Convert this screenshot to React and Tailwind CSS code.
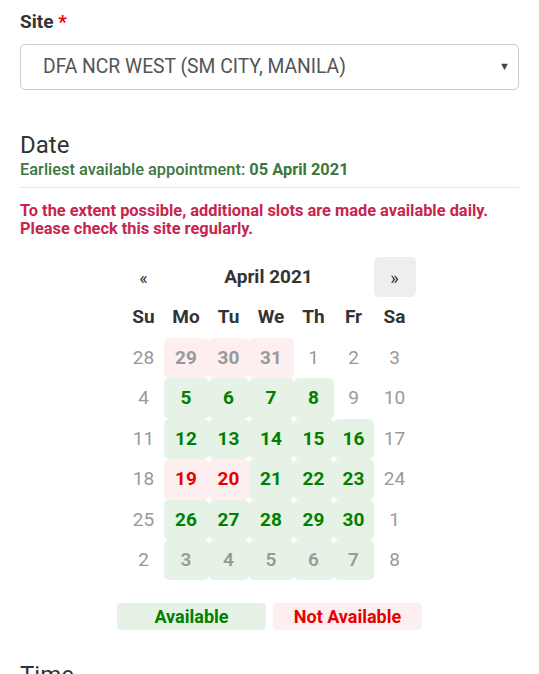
import React from 'react';

const cols = ['Su', 'Mo', 'Tu', 'We', 'Th', 'Fr', 'Sa'];

// kind: o = plain gray, x = not available (pink, gray), a = available (green),
// n = not available (pink, red), f = next month available (green, gray)
const weeks = [
    [['28', 'o'], ['29', 'x'], ['30', 'x'], ['31', 'x'], ['1', 'o'], ['2', 'o'], ['3', 'o']],
    [['4', 'o'], ['5', 'a'], ['6', 'a'], ['7', 'a'], ['8', 'a'], ['9', 'o'], ['10', 'o']],
    [['11', 'o'], ['12', 'a'], ['13', 'a'], ['14', 'a'], ['15', 'a'], ['16', 'a'], ['17', 'o']],
    [['18', 'o'], ['19', 'n'], ['20', 'n'], ['21', 'a'], ['22', 'a'], ['23', 'a'], ['24', 'o']],
    [['25', 'o'], ['26', 'a'], ['27', 'a'], ['28', 'a'], ['29', 'a'], ['30', 'a'], ['1', 'o']],
    [['2', 'o'], ['3', 'f'], ['4', 'f'], ['5', 'f'], ['6', 'f'], ['7', 'f'], ['8', 'o']],
];

const cellStyle = {
    o: 'text-[#999] font-normal',
    x: 'bg-[#fdeef0] text-[#999] font-bold rounded-[5px]',
    a: 'bg-[#e5f2e5] text-[#008000] font-bold rounded-[5px]',
    n: 'bg-[#fdeef0] text-[#e60000] font-bold rounded-[5px]',
    f: 'bg-[#e5f2e5] text-[#999] font-semibold rounded-[5px]',
};

const grid = 'grid grid-cols-[40px_45px_40px_45px_40px_40px_42px]';

const Calendar = () => {
    return (
        <div className="mt-[19px] flex justify-center">
            <div className="text-[19px]">
                <div className={grid + ' h-[40px] items-center text-[#333]'}>
                    <div className="text-center text-[18px]">«</div>
                    <div className="col-span-5 text-center font-bold">April 2021</div>
                    <div className="h-[40px] flex items-center justify-center rounded-[5px] bg-[#eee] text-[18px]">»</div>
                </div>
                <div className={grid + ' h-[41px] items-center text-[#333] font-bold'}>
                    {cols.map((c) => (
                        <div key={c} className="text-center">{c}</div>
                    ))}
                </div>
                {weeks.map((week, i) => (
                    <div key={i} className={grid}>
                        {week.map(([d, k], j) => (
                            <div key={j} className={'h-[40.4px] flex items-center justify-center ' + cellStyle[k]}>
                                {d}
                            </div>
                        ))}
                    </div>
                ))}
            </div>
        </div>
    );
};

const App = () => {
    return (
        <div className="h-[674px] overflow-hidden bg-white px-5 pt-[10px] font-['Roboto',sans-serif]">
            <label className="block text-[19px] leading-[24px] font-bold text-[#333]">
                Site <span className="text-[#e00]">*</span>
            </label>
            <div className="mt-[10px] h-[46px] border border-[#ccc] rounded-[5px] flex items-center justify-between pl-[22px] pr-[8px]">
                <span className="text-[19.3px] text-[#555]">DFA NCR WEST (SM CITY, MANILA)</span>
                <span className="text-[11px] text-[#444]">▼</span>
            </div>

            <h2 className="mt-[40px] text-[24px] leading-[30px] text-[#333]">Date</h2>
            <p className="text-[16.4px] leading-[20px] font-medium text-[#3c763d]">
                Earliest available appointment: <span className="font-bold">05 April 2021</span>
            </p>
            <div className="mt-[7px] border-t border-[#e5e5e5]" />
            <p className="mt-[14px] text-[16.4px] leading-[18px] font-bold text-[#c7254e]">
                To the extent possible, additional slots are made available daily.
                <br />
                Please check this site regularly.
            </p>

            <Calendar />

            <div className="mt-[23px] flex justify-center gap-[7px]">
                <div className="w-[149px] h-[27px] flex items-center justify-center rounded-[4px] bg-[#e5f2e5] text-[18px] font-bold text-[#008000]">
                    Available
                </div>
                <div className="w-[149px] h-[27px] flex items-center justify-center rounded-[4px] bg-[#fdeef0] text-[18px] font-bold text-[#e60000]">
                    Not Available
                </div>
            </div>

            <h2 className="mt-[30px] text-[24px] leading-[30px] text-[#333]">Time</h2>
        </div>
    );
};

export default App;
